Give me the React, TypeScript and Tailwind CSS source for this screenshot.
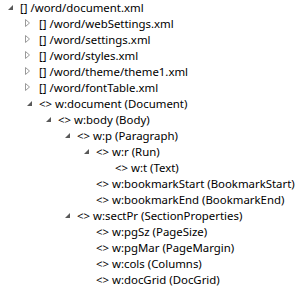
import { useState } from "react";

type TreeNode = {
  id: string;
  label: string;
  kind: "part" | "element";
  children?: TreeNode[];
  expanded?: boolean;
};

const TREE: TreeNode[] = [
  {
    id: "doc",
    label: "/word/document.xml",
    kind: "part",
    expanded: true,
    children: [
      { id: "web", label: "/word/webSettings.xml", kind: "part", children: [] },
      { id: "settings", label: "/word/settings.xml", kind: "part", children: [] },
      { id: "styles", label: "/word/styles.xml", kind: "part", children: [] },
      { id: "theme", label: "/word/theme/theme1.xml", kind: "part", children: [] },
      { id: "fonts", label: "/word/fontTable.xml", kind: "part", children: [] },
      {
        id: "w-document",
        label: "w:document (Document)",
        kind: "element",
        expanded: true,
        children: [
          {
            id: "w-body",
            label: "w:body (Body)",
            kind: "element",
            expanded: true,
            children: [
              {
                id: "w-p",
                label: "w:p (Paragraph)",
                kind: "element",
                expanded: true,
                children: [
                  {
                    id: "w-r",
                    label: "w:r (Run)",
                    kind: "element",
                    expanded: true,
                    children: [{ id: "w-t", label: "w:t (Text)", kind: "element" }],
                  },
                  { id: "bm-start", label: "w:bookmarkStart (BookmarkStart)", kind: "element" },
                  { id: "bm-end", label: "w:bookmarkEnd (BookmarkEnd)", kind: "element" },
                ],
              },
              {
                id: "sect",
                label: "w:sectPr (SectionProperties)",
                kind: "element",
                expanded: true,
                children: [
                  { id: "pgsz", label: "w:pgSz (PageSize)", kind: "element" },
                  { id: "pgmar", label: "w:pgMar (PageMargin)", kind: "element" },
                  { id: "cols", label: "w:cols (Columns)", kind: "element" },
                  { id: "grid", label: "w:docGrid (DocGrid)", kind: "element" },
                ],
              },
            ],
          },
        ],
      },
    ],
  },
];

function Expander({ hasChildren, open, onToggle }: { hasChildren: boolean; open: boolean; onToggle: () => void }) {
  if (!hasChildren) return <span className="h-4 w-[19px] shrink-0" />;
  return (
    <button type="button" onClick={onToggle} className="flex h-4 w-[19px] shrink-0 items-start">
      {open ? (
        <svg width="5" height="5" viewBox="0 0 5 5" className="ml-[8px] mt-[5px]">
          <path d="M5 0 L5 5 L0 5 Z" fill="#595959" />
        </svg>
      ) : (
        <svg width="5" height="8" viewBox="0 0 5 8" className="ml-[6px] mt-[3px]">
          <path d="M0.5 0.5 L4.5 4 L0.5 7.5 Z" fill="none" stroke="#9a9a9a" strokeWidth="1" />
        </svg>
      )}
    </button>
  );
}

function TreeItem({ node }: { node: TreeNode }) {
  const [open, setOpen] = useState(!!node.expanded);
  const hasChildren = node.children !== undefined;

  return (
    <div>
      <div className="flex h-4 items-center whitespace-nowrap">
        <Expander hasChildren={hasChildren} open={open} onToggle={() => setOpen(!open)} />
        <span className="pl-[1px] leading-4">
          {node.kind === "part" ? "[] " : "<> "}
          {node.label}
        </span>
      </div>
      {open && node.children && node.children.length > 0 && (
        <div className="pl-[19px]">
          {node.children.map((child) => (
            <TreeItem key={child.id} node={child} />
          ))}
        </div>
      )}
    </div>
  );
}

export default function App() {
  return (
    <div className="h-[293px] w-[300px] overflow-hidden bg-white text-[11.4px] text-black [font-family:'Noto_Sans','Open_Sans',sans-serif]">
      {TREE.map((node) => (
        <TreeItem key={node.id} node={node} />
      ))}
    </div>
  );
}
